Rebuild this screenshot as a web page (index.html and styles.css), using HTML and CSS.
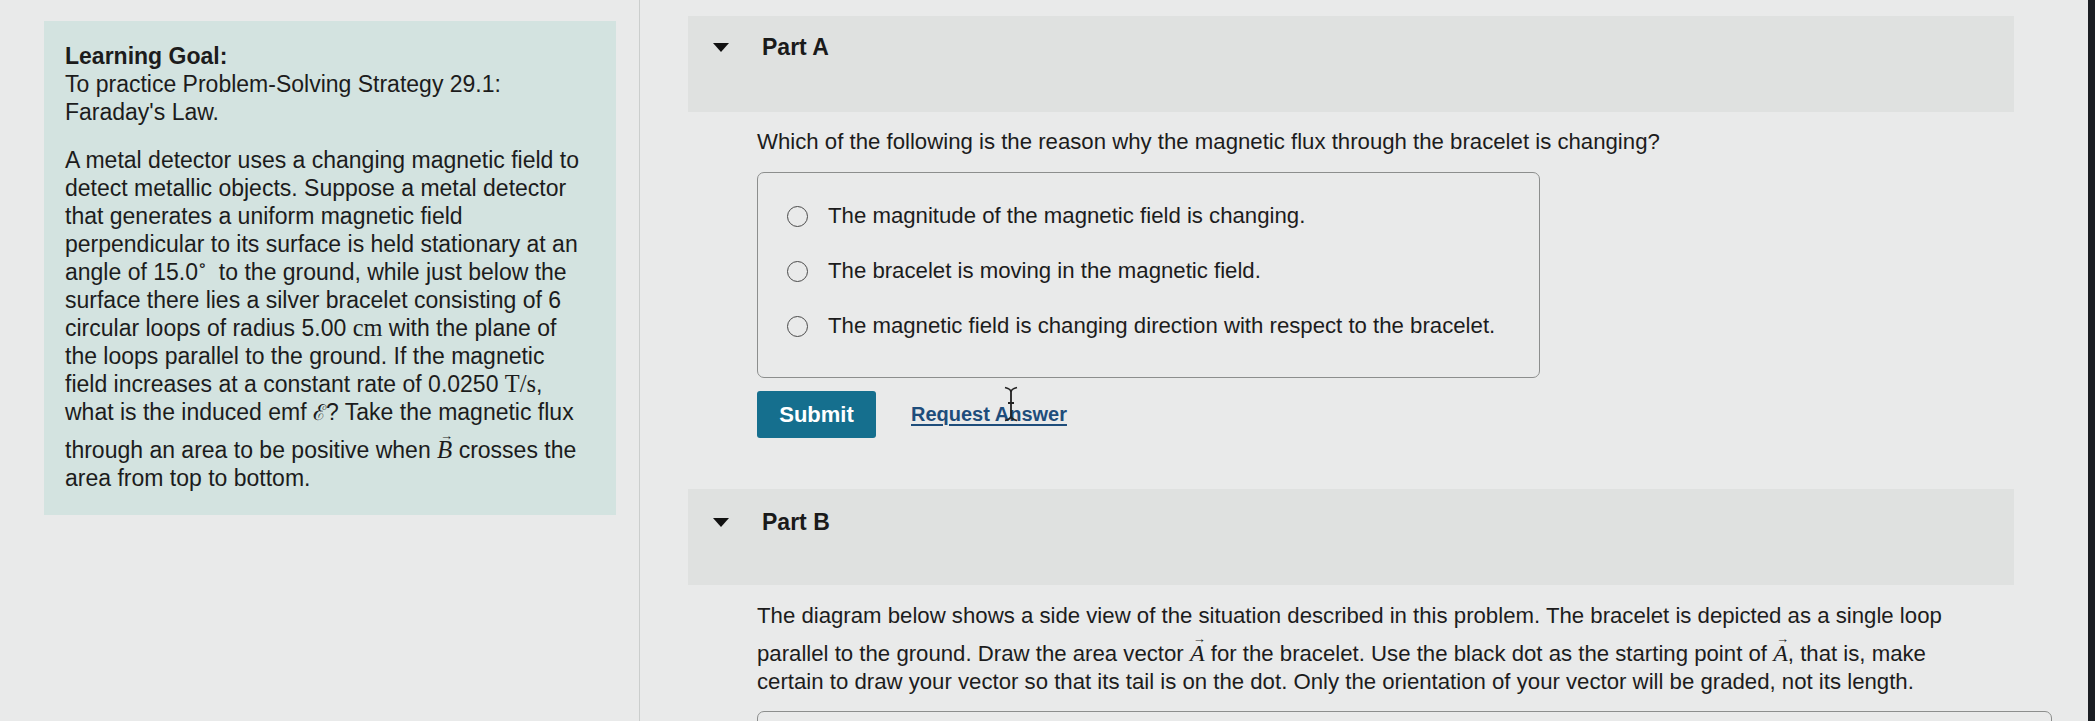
FILE: index.html
```html
<!DOCTYPE html>
<html lang="en">
<head>
<meta charset="utf-8">
<title>Faraday's Law</title>
<link rel="stylesheet" href="styles.css">
</head>
<body>
<div class="page">
  <aside class="left-col">
    <div class="intro">
      <p><strong>Learning Goal:</strong><br>To practice Problem-Solving Strategy 29.1: Faraday's Law.</p>
      <p>A metal detector uses a changing magnetic field to detect metallic objects. Suppose a metal detector that generates a uniform magnetic field perpendicular to its surface is held stationary at an angle of 15.0<span class="deg">∘</span> to the ground, while just below the surface there lies a silver bracelet consisting of 6 circular loops of radius 5.00 <span class="m">cm</span> with the plane of the loops parallel to the ground. If the magnetic field increases at a constant rate of 0.0250 <span class="m">T/s</span>, what is the induced emf <span class="m script">ℰ</span>? Take the magnetic flux through an area to be positive when <span class="vec">B</span> crosses the area from top to bottom.</p>
    </div>
  </aside>

  <main class="right-col">
    <section class="part">
      <div class="part-head"><span class="tri"></span><span class="part-title">Part A</span></div>
      <div class="part-body">
        <p class="question">Which of the following is the reason why the magnetic flux through the bracelet is changing?</p>
        <div class="choices">
          <label class="choice"><span class="radio"></span>The magnitude of the magnetic field is changing.</label>
          <label class="choice"><span class="radio"></span>The bracelet is moving in the magnetic field.</label>
          <label class="choice"><span class="radio"></span>The magnetic field is changing direction with respect to the bracelet.</label>
        </div>
        <div class="actions">
          <button class="submit" type="button">Submit</button>
          <a class="req" href="#">Request Answer</a>
          <svg class="cursor" width="16" height="36" viewBox="0 0 16 36" aria-hidden="true"><path d="M2 1.5 Q8 3 8 6 Q8 3 14 1.5 M8 5 V31 M5 17 H11 M2 34.5 Q8 33 8 30 Q8 33 14 34.5" fill="none" stroke="#222" stroke-width="1.8"/></svg>
        </div>
      </div>
    </section>

    <section class="part part-b">
      <div class="part-head"><span class="tri"></span><span class="part-title">Part B</span></div>
      <div class="part-body">
        <p class="desc">The diagram below shows a side view of the situation described in this problem. The bracelet is depicted as a single loop parallel to the ground. Draw the area vector <span class="vec">A</span> for the bracelet. Use the black dot as the starting point of <span class="vec">A</span>, that is, make certain to draw your vector so that its tail is on the dot. Only the orientation of your vector will be graded, not its length.</p>
        <div class="answer-box"></div>
      </div>
    </section>
  </main>

  <div class="bezel"></div>
</div>
</body>
</html>
```

FILE: styles.css
```css
* { box-sizing: border-box; }

html, body {
  margin: 0;
  height: 100%;
  overflow: hidden;
}

body {
  background: #e9eaea;
  font-family: "Liberation Sans", Arial, sans-serif;
  color: #1c1c1c;
}

.page {
  display: flex;
  height: 721px;
}

/* ---------- left column ---------- */
.left-col {
  width: 640px;
  flex: none;
  border-right: 1px solid #cbcecd;
  padding: 21px 0 0 44px;
}

.intro {
  width: 572px;
  background: #d3e3e0;
  padding: 21px 28px 23px 21px;
  font-size: 23px;
  line-height: 28px;
}

.intro p { margin: 0; }
.intro p + p { margin-top: 20px; }

/* math bits */
.m {
  font-family: "Liberation Serif", "DejaVu Serif", serif;
  font-size: 1.06em;
}

.script { font-family: "DejaVu Serif", "Liberation Serif", serif; font-size: 0.95em; }

.deg {
  font-family: "Liberation Serif", "DejaVu Serif", serif;
  font-size: 0.75em;
  vertical-align: 0.55em;
  line-height: 0;
  margin-right: 6px;
}

.vec {
  display: inline-block;
  position: relative;
  padding-top: 9px;
  font-family: "Liberation Serif", "DejaVu Serif", serif;
  font-style: italic;
  font-size: 1.08em;
  line-height: 28px;
}

.vec::before {
  content: "\2192";
  position: absolute;
  top: 2px;
  left: 50%;
  transform: translateX(-35%);
  font-style: normal;
  font-size: 13px;
  line-height: 13px;
}

/* ---------- right column ---------- */
.right-col {
  flex: 1;
  padding: 16px 0 0 48px;
}

.part-head {
  width: 1326px;
  height: 96px;
  background: #dfe1e0;
  display: flex;
  align-items: center;
  padding: 0 0 0 25px;
}

.part-head .tri,
.part-head .part-title { margin-bottom: 34px; }

.part-b .part-head .tri,
.part-b .part-head .part-title { margin-bottom: 30px; }

.tri {
  width: 0;
  height: 0;
  border-left: 8.5px solid transparent;
  border-right: 8.5px solid transparent;
  border-top: 9px solid #111;
  margin-right: 33px;
}

.part-title {
  font-weight: bold;
  font-size: 23px;
  line-height: 28px;
  color: #1a1a1a;
}

.part-body {
  padding-left: 69px;
}

.question {
  margin: 16px 0 0;
  font-size: 22.2px;
  line-height: 28px;
}

.choices {
  margin-top: 16px;
  width: 783px;
  height: 206px;
  border: 1.5px solid #8c8e8d;
  border-radius: 7px;
  padding: 29px 0 0 29px;
  display: flex;
  flex-direction: column;
  gap: 27px;
}

.choice {
  display: flex;
  align-items: center;
  font-size: 22.2px;
  line-height: 28px;
}

.radio {
  width: 21px;
  height: 21px;
  border: 1.8px solid #4a4a4a;
  border-radius: 50%;
  margin-right: 20px;
  flex: none;
}

.actions {
  margin-top: 13px;
  display: flex;
  align-items: center;
  position: relative;
}

.submit {
  width: 119px;
  height: 47px;
  background: #156f8e;
  color: #fff;
  font-family: "Liberation Sans", Arial, sans-serif;
  font-weight: bold;
  font-size: 22px;
  border: 0;
  border-radius: 3px;
  padding: 0;
}

.req {
  margin-left: 35px;
  font-weight: bold;
  font-size: 20px;
  color: #1e4d7b;
  text-decoration: underline;
  text-underline-offset: 3px;
}

.cursor {
  position: absolute;
  left: 246px;
  top: -5px;
}

.part-b { margin-top: 51px; }

.desc {
  margin: 17px 0 0;
  font-size: 22.2px;
  line-height: 28px;
  width: 1215px;
}

.answer-box {
  margin-top: 15px;
  width: 1295px;
  height: 80px;
  border: 1.5px solid #8c8e8d;
  border-radius: 7px 7px 0 0;
}

.bezel {
  width: 7px;
  flex: none;
  background: #1b1e23;
}
```
